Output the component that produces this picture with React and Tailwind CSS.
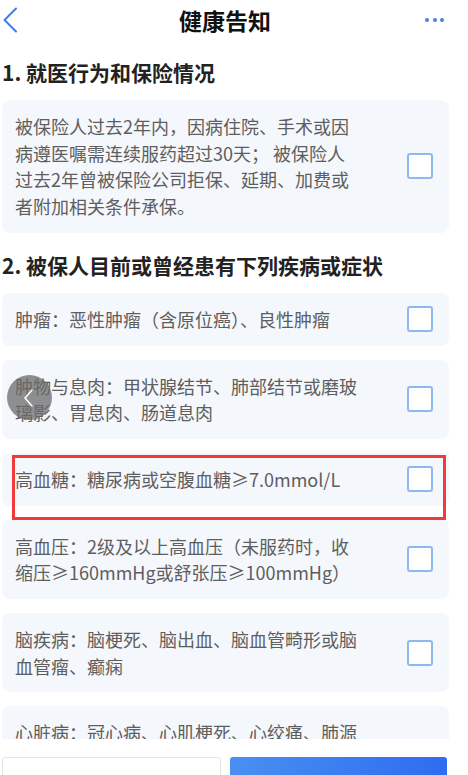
const sections = [
  {
    title: "1. 就医行为和保险情况",
    items: [
      [
        "被保险人过去2年内，因病住院、手术或因",
        "病遵医嘱需连续服药超过30天； 被保险人",
        "过去2年曾被保险公司拒保、延期、加费或",
        "者附加相关条件承保。",
      ],
    ],
  },
  {
    title: "2. 被保人目前或曾经患有下列疾病或症状",
    items: [
      ["肿瘤：恶性肿瘤（含原位癌）、良性肿瘤"],
      ["肿物与息肉：甲状腺结节、肺部结节或磨玻", "璃影、胃息肉、肠道息肉"],
      ["高血糖：糖尿病或空腹血糖≥7.0mmol/L"],
      ["高血压：2级及以上高血压（未服药时，收", "缩压≥160mmHg或舒张压≥100mmHg）"],
      ["脑疾病：脑梗死、脑出血、脑血管畸形或脑", "血管瘤、癫痫"],
      [
        "心脏病：冠心病、心肌梗死、心绞痛、肺源",
        "性心脏病、心肌病、心功能不全二级及以上",
        "、先天性心脏病",
      ],
    ],
  },
];

const Checkbox = () => (
  <span className="block size-[26px] shrink-0 rounded-[3px] border-2 border-[#8db9f0] bg-white" />
);

const Card = ({ lines, marked }) => (
  <div className="relative flex items-center justify-between rounded-[8px] bg-[#f4f7fc] py-[13px] pl-[13px] pr-[16px]">
    <p className="w-[360px] whitespace-nowrap text-[18px] leading-[26.7px] text-[#5e5e5e]">
      {lines.map((line, i) => (
        <span key={line} className="block">
          {line}
        </span>
      ))}
    </p>
    <Checkbox />
    {marked && (
      <div className="pointer-events-none absolute left-[10px] right-[3px] top-[2px] bottom-[-14px] border-[3px] border-[#f23a3c]" />
    )}
  </div>
);

export default function App() {
  return (
    <div
      className="relative flex h-[775px] w-[468px] flex-col overflow-hidden bg-white"
      style={{ fontFamily: '"Noto Sans CJK SC", "Noto Sans", sans-serif' }}
    >
      <header className="grid h-[40px] w-[450px] shrink-0 grid-cols-[1fr_auto_1fr] items-center">
        <svg
          className="ml-[3px] h-[26px] w-[15px]"
          viewBox="0 0 15 26"
          fill="none"
          stroke="#3b7cf0"
          strokeWidth="2"
          strokeLinecap="round"
          strokeLinejoin="round"
        >
          <path d="M13 1.5 L1.5 13 L13 24.5" />
        </svg>
        <h1 className="text-[23px] font-bold leading-[30px] text-[#111]">
          健康告知
        </h1>
        <div className="flex items-center justify-end gap-[3.5px] pr-[6px]">
          <span className="size-[4px] rounded-full bg-[#4a80e0]" />
          <span className="size-[4px] rounded-full bg-[#4a80e0]" />
          <span className="size-[4px] rounded-full bg-[#4a80e0]" />
        </div>
      </header>

      <main className="flex-1 overflow-hidden pl-[2px] pr-[19px]">
        {sections.map((section) => (
          <section key={section.title}>
            <h2 className="pt-[17px] pb-[13px] text-[21px] font-semibold leading-[30px] text-[#222]">
              {section.title}
            </h2>
            <div className="flex flex-col gap-[14px]">
              {section.items.map((lines) => (
                <Card
                  key={lines[0]}
                  lines={lines}
                  marked={lines[0].startsWith("高血糖")}
                />
              ))}
            </div>
          </section>
        ))}
      </main>

      <footer className="flex h-[36px] shrink-0 gap-[9px] bg-white pl-[2px] pr-[21px] pt-[18px]">
        <button
          type="button"
          className="h-[40px] flex-1 rounded-t-[3px] border border-[#e4e4e4] bg-white"
        />
        <button
          type="button"
          className="h-[40px] flex-1 rounded-t-[3px] bg-gradient-to-r from-[#4a8ff0] to-[#2f6cf0]"
        />
      </footer>

      <div className="absolute left-[7px] top-[375px] flex size-[45px] items-center justify-center rounded-full bg-[#6b6b6b]/75">
        <svg
          className="mr-[3px] h-[18px] w-[9px]"
          viewBox="0 0 9 18"
          fill="none"
          stroke="white"
          strokeWidth="1.5"
          strokeLinecap="round"
          strokeLinejoin="round"
        >
          <path d="M8 1 L1 9 L8 17" />
        </svg>
      </div>
    </div>
  );
}
